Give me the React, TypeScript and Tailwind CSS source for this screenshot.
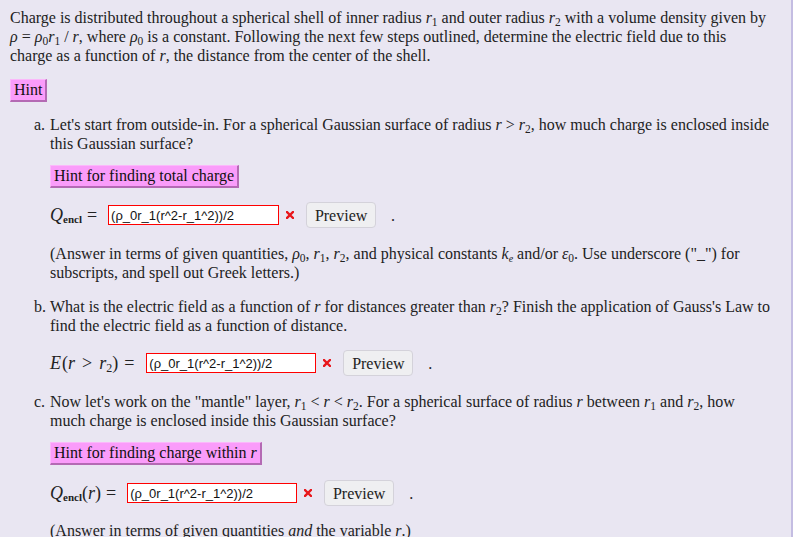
import React from "react";

const V = ({ children }: { children: React.ReactNode }) => (
  <span className="italic">{children}</span>
);
const S = ({ children }: { children: React.ReactNode }) => (
  <sub className="not-italic text-[11.5px]">{children}</sub>
);
const R = ({ n }: { n: string }) => (
  <span className="whitespace-nowrap">
    <V>r</V>
    <S>{n}</S>
  </span>
);
const Op = ({ children }: { children: React.ReactNode }) => (
  <span className="px-[4px]">{children}</span>
);
const MOp = ({ children }: { children: React.ReactNode }) => (
  <span className="px-[5px]">{children}</span>
);
const WOp = ({ children }: { children: React.ReactNode }) => (
  <span className="px-[7px]">{children}</span>
);

const HintBtn = ({ children }: { children: React.ReactNode }) => (
  <div className="inline-flex h-[23px] items-center border-t border-l border-t-[#fbb8fb] border-l-[#fbb8fb] border-b-2 border-r-2 border-b-[#b46ab4] border-r-[#b46ab4] bg-[#fa9cfa] px-[3px] text-[16px] leading-none text-[#111]">
    {children}
  </div>
);

const Cross = () => (
  <svg width="8" height="8" viewBox="0 0 8 8" className="shrink-0">
    <path d="M1 1 L7 7 M7 1 L1 7" stroke="#e8161b" strokeWidth="2.4" strokeLinecap="square" />
  </svg>
);

const AnswerRow = ({
  label,
  inputW,
}: {
  label: React.ReactNode;
  inputW: string;
}) => (
  <div className="flex h-[26px] items-center">
    <div className="whitespace-nowrap pr-[6px] text-[18px]">{label}</div>
    <div
      className={`${inputW} flex h-[20px] items-center border border-[#ff0000] bg-white pl-[2px] text-[13px] text-[#111]`}
      style={{ fontFamily: '"Liberation Sans", Arial, sans-serif' }}
    >
      (ρ_0r_1(r^2-r_1^2))/2
    </div>
    <div className="ml-[7px] mr-[12px] flex items-center">
      <Cross />
    </div>
    <div className="flex h-[26px] w-[70px] items-center justify-center rounded-[4px] border border-[#d4d2da] bg-[#efeff1] text-[16px] text-[#222]">
      Preview
    </div>
    <div className="ml-[15px] text-[16px]">.</div>
  </div>
);

const Item = ({ mark, children }: { mark: string; children: React.ReactNode }) => (
  <div className="relative pl-[40px]">
    <div className="absolute left-[24px] top-0">{mark}</div>
    {children}
  </div>
);

export default function App() {
  return (
    <div
      className="h-[537px] w-[793px] overflow-hidden border-r-2 border-[#c4bde2] bg-[#e9e6f2] pl-[10px] pt-[8px] text-[16px] leading-[19px] text-[#222]"
      style={{ fontFamily: '"Liberation Serif", "Times New Roman", serif' }}
    >
      <p>
        Charge is distributed throughout a spherical shell of inner radius <R n="1" /> and outer radius <R n="2" /> with a volume density given by
        <br />
        <V>ρ</V>
        <Op>=</Op>
        <V>ρ</V>
        <S>0</S>
        <V>r</V>
        <S>1</S> / <V>r</V>, where <V>ρ</V>
        <S>0</S> is a constant. Following the next few steps outlined, determine the electric field due to this
        <br />
        charge as a function of <V>r</V>, the distance from the center of the shell.
      </p>

      <div className="mt-[14px]">
        <HintBtn>Hint</HintBtn>
      </div>

      <div className="mt-[13px]">
        <Item mark="a.">
          <p>
            Let's start from outside-in. For a spherical Gaussian surface of radius <V>r</V>
            <Op>&gt;</Op>
            <R n="2" />, how much charge is enclosed inside
            <br />
            this Gaussian surface?
          </p>
          <div className="mt-[12px]">
            <HintBtn>Hint for finding total charge</HintBtn>
          </div>
          <div className="mt-[14px]">
            <AnswerRow
              inputW="w-[171px]"
              label={
                <>
                  <V>Q</V>
                  <sub className="text-[11px] font-bold">encl</sub>
                  <MOp>=</MOp>
                </>
              }
            />
          </div>
          <p className="mt-[16px]">
            (Answer in terms of given quantities, <V>ρ</V>
            <S>0</S>, <R n="1" />, <R n="2" />, and physical constants <V>k</V>
            <sub className="text-[10px] italic">e</sub> and/or <V>ε</V>
            <S>0</S>. Use underscore ("_") for
            <br />
            subscripts, and spell out Greek letters.)
          </p>
        </Item>

        <div className="mt-[15px]">
          <Item mark="b.">
            <p>
              What is the electric field as a function of <V>r</V> for distances greater than <R n="2" />? Finish the application of Gauss's Law to
              <br />
              find the electric field as a function of distance.
            </p>
            <div className="mt-[15px]">
              <AnswerRow
                inputW="w-[170px]"
                label={
                  <>
                    <V>E</V>
                    <span className="pl-[1px]">(</span>
                    <V>r</V>
                    <WOp>&gt;</WOp>
                    <V>r</V>
                    <sub className="text-[12px]">2</sub>)<span className="px-[6px]">=</span>
                  </>
                }
              />
            </div>
          </Item>
        </div>

        <div className="mt-[16px]">
          <Item mark="c.">
            <p>
              Now let's work on the "mantle" layer, <R n="1" />
              <Op>&lt;</Op>
              <V>r</V>
              <Op>&lt;</Op>
              <R n="2" />. For a spherical surface of radius <V>r</V> between <R n="1" /> and <R n="2" />, how
              <br />
              much charge is enclosed inside this Gaussian surface?
            </p>
            <div className="mt-[12px]">
              <HintBtn>
                Hint for finding charge within&nbsp;<V>r</V>
              </HintBtn>
            </div>
            <div className="mt-[15px]">
              <AnswerRow
                inputW="w-[170px]"
                label={
                  <>
                    <V>Q</V>
                    <sub className="text-[11px] font-bold">encl</sub>(<V>r</V>)<MOp>=</MOp>
                  </>
                }
              />
            </div>
            <p className="mt-[15px]">
              (Answer in terms of given quantities <V>and</V> the variable <V>r</V>.)
            </p>
          </Item>
        </div>
      </div>
    </div>
  );
}
